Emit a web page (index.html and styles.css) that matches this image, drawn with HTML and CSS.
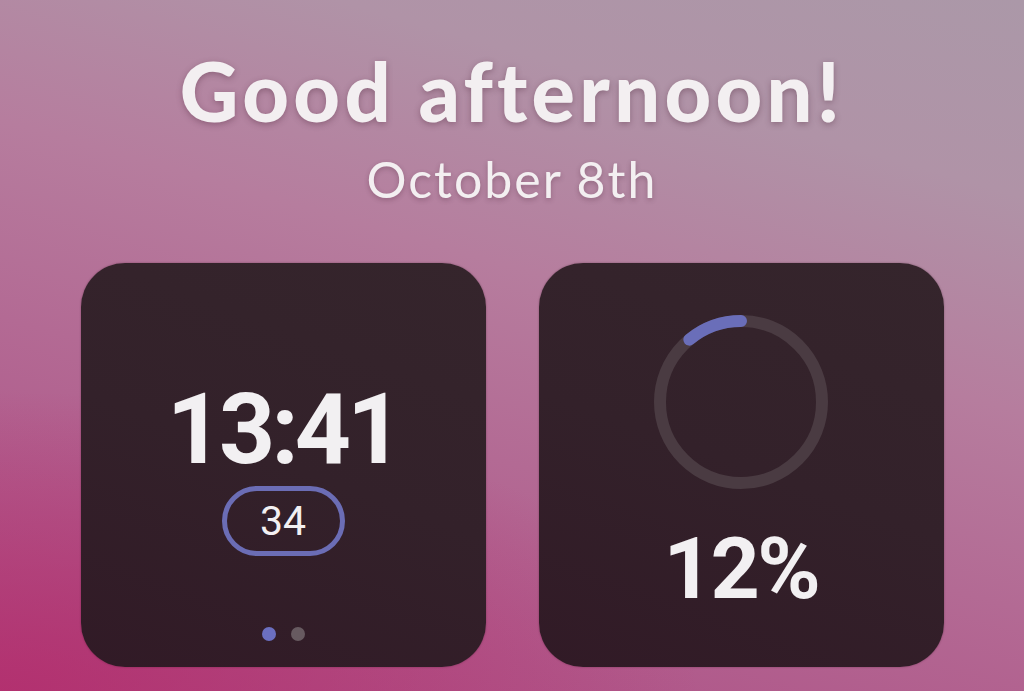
FILE: index.html
```html
<!DOCTYPE html>
<html lang="en">
<head>
<meta charset="utf-8">
<title>Good afternoon</title>
<link rel="stylesheet" href="styles.css">
</head>
<body>
<main class="screen">
  <header class="greeting">
    <h1 class="greeting-title">Good afternoon!</h1>
    <p class="greeting-date">October 8th</p>
  </header>
  <section class="widgets">
    <div class="card card-clock">
      <div class="clock-time">13:41</div>
      <div class="clock-seconds">34</div>
      <div class="pager">
        <span class="pager-dot pager-dot-active"></span>
        <span class="pager-dot"></span>
      </div>
    </div>
    <div class="card card-progress">
      <svg class="ring" width="186" height="186" viewBox="0 0 186 186">
        <circle class="ring-track" cx="93" cy="93" r="81"></circle>
        <circle class="ring-value" cx="93" cy="93" r="81" transform="rotate(-90 93 93) scale(1 -1) translate(0 -186)"></circle>
      </svg>
      <div class="progress-value">12%</div>
    </div>
  </section>
</main>
</body>
</html>
```
FILE: styles.css
```css
html, body {
  margin: 0;
  padding: 0;
}

body {
  width: 1024px;
  height: 691px;
  overflow: hidden;
  font-family: "Lato", "Noto Sans", sans-serif;
  background:
    radial-gradient(ellipse 700px 300px at 0% 100%, rgba(180, 40, 105, 0.75), rgba(180, 40, 105, 0) 100%),
    linear-gradient(196deg, #ab98a8 0%, #b093a7 20%, #b67d9e 42%, #b36a94 62%, #b0588a 82%, #ae4a82 100%);
}

.screen {
  display: flex;
  flex-direction: column;
  align-items: center;
  height: 691px;
}

.greeting {
  display: flex;
  flex-direction: column;
  align-items: center;
  padding-top: 50px;
}

.greeting-title {
  margin: 0;
  font-size: 81px;
  line-height: 1;
  font-weight: 900;
  letter-spacing: 4.3px;
  color: #f3eff1;
  text-shadow: 0 2px 6px rgba(70, 30, 50, 0.35);
}

.greeting-date {
  margin: 23px 0 0;
  font-size: 50px;
  line-height: 1;
  font-weight: 400;
  letter-spacing: 2px;
  color: #f3eff1;
  text-shadow: 0 2px 5px rgba(70, 30, 50, 0.3);
}

.widgets {
  display: flex;
  gap: 53px;
  margin-top: 59px;
}

.card {
  width: 405px;
  height: 404px;
  box-sizing: border-box;
  border-radius: 44px;
  background: linear-gradient(20deg, #311a26 0%, #33212a 50%, #35252c 100%);
  display: flex;
  flex-direction: column;
  align-items: center;
  color: #f2f0f2;
  box-shadow: 0 0 2px rgba(40, 10, 25, 0.4);
}

.card-clock {
  padding-top: 118px;
  padding-bottom: 26px;
}

.clock-time {
  font-family: "Roboto", "Noto Sans", sans-serif;
  font-weight: 700;
  font-size: 98px;
  line-height: 1;
  letter-spacing: -4px;
}

.clock-seconds {
  margin-top: 7px;
  width: 123px;
  height: 70px;
  box-sizing: border-box;
  border: 5.5px solid #6b6db5;
  border-radius: 35px;
  display: flex;
  align-items: center;
  justify-content: center;
  font-family: "Roboto", "Noto Sans", sans-serif;
  font-weight: 400;
  font-size: 41px;
  line-height: 1;
}

.pager {
  margin-top: auto;
  display: flex;
  gap: 15px;
}

.pager-dot {
  width: 14px;
  height: 14px;
  border-radius: 50%;
  background: #675a60;
}

.pager-dot-active {
  background: #6b6fc0;
}

.card-progress {
  padding-top: 46px;
}

.ring {
  display: block;
}

.ring-track {
  fill: none;
  stroke: #4a3b42;
  stroke-width: 12;
}

.ring-value {
  fill: none;
  stroke: #6a6eb9;
  stroke-width: 12;
  stroke-linecap: round;
  stroke-dasharray: 56 600;
}

.progress-value {
  margin-top: 31px;
  font-family: "Roboto", "Noto Sans", sans-serif;
  font-weight: 700;
  font-size: 86px;
  line-height: 1;
  letter-spacing: -2.5px;
}
```
